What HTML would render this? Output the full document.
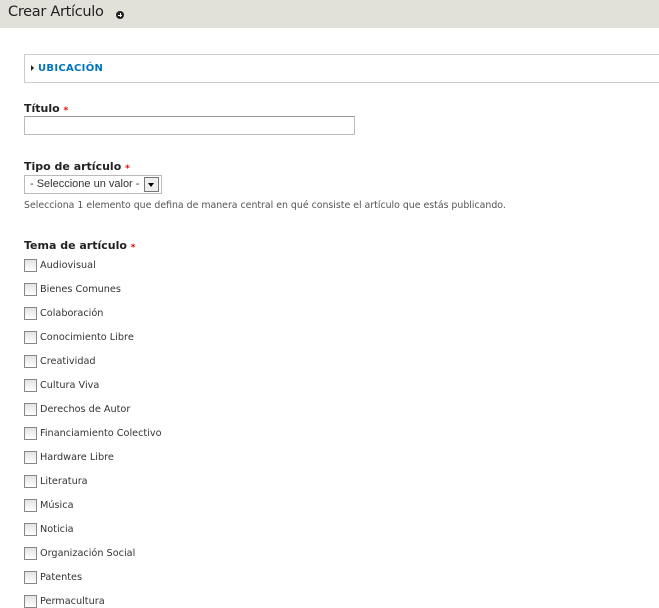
<!DOCTYPE html>
<html><head><meta charset="utf-8"><style>
body{margin:0;width:659px;height:604px;overflow:hidden;background:#fff;font-family:"DejaVu Sans",sans-serif;color:#333;}
.hdr{position:absolute;left:0;top:0;width:659px;height:28px;background:#e1e0d9;}
.hdr h1{position:absolute;left:8px;top:4px;margin:0;font:normal 14.5px "DejaVu Sans",sans-serif;color:#222;letter-spacing:-0.3px}
.plus{position:absolute;left:116px;top:11px;width:8px;height:8px;border-radius:50%;background:#222;}
.plus:before{content:"";position:absolute;left:2px;top:3.5px;width:4px;height:1px;background:#fff}
.plus:after{content:"";position:absolute;left:3.5px;top:2px;width:1px;height:4px;background:#fff}
.fs{position:absolute;left:24px;top:54px;width:640px;height:27px;border:1px solid #ccc;}
.fs span{position:absolute;left:13px;top:8px;font:bold 10px "DejaVu Sans",sans-serif;color:#0074bd;letter-spacing:.3px}
.fs i{position:absolute;left:6px;top:10px;width:0;height:0;border-left:3px solid #222;border-top:3px solid transparent;border-bottom:3px solid transparent}
.lbl{position:absolute;left:24px;font:bold 11px "DejaVu Sans",sans-serif;color:#222}
.lbl b{color:#e00;font-size:9px;position:relative;top:1px}
.inp{position:absolute;left:24px;top:116px;width:329px;height:17px;border:1px solid #bbb;border-top-color:#999}
.sel{position:absolute;left:24px;top:175px;width:136px;height:17px;border:1px solid #bbb;font:11px "Liberation Sans",sans-serif;color:#333}
.sel span{position:absolute;left:5px;top:2px}
.sel i{position:absolute;right:2px;top:1px;width:13px;height:13px;border:1px solid #777;background:#eee}
.sel i:after{content:"";position:absolute;left:3px;top:5px;border-top:4px solid #000;border-left:3.5px solid transparent;border-right:3.5px solid transparent}
.desc{position:absolute;left:24px;top:200px;font:9.4px "DejaVu Sans",sans-serif;color:#555}
.cb{position:absolute;left:24px;font:9.7px "DejaVu Sans",sans-serif;color:#333}
.cb i{position:absolute;left:0;top:0;width:11px;height:11px;border:1px solid #888;background:linear-gradient(#e4e4e4,#fff)}
.cb span{position:absolute;left:16px;top:1px;white-space:nowrap}
</style></head><body>
<div class="hdr"><h1>Crear Artículo</h1><div class="plus"></div></div>
<div class="fs"><i></i><span>UBICACIÓN</span></div>
<div class="lbl" style="top:102px">Título <b>*</b></div>
<div class="inp"></div>
<div class="lbl" style="top:160px">Tipo de artículo <b>*</b></div>
<div class="sel"><span>- Seleccione un valor -</span><i></i></div>
<div class="desc">Selecciona 1 elemento que defina de manera central en qué consiste el artículo que estás publicando.</div>
<div class="lbl" style="top:239px">Tema de artículo <b>*</b></div>
<div class="cb" style="top:259px"><i></i><span>Audiovisual</span></div>
<div class="cb" style="top:283px"><i></i><span>Bienes Comunes</span></div>
<div class="cb" style="top:307px"><i></i><span>Colaboración</span></div>
<div class="cb" style="top:331px"><i></i><span>Conocimiento Libre</span></div>
<div class="cb" style="top:355px"><i></i><span>Creatividad</span></div>
<div class="cb" style="top:379px"><i></i><span>Cultura Viva</span></div>
<div class="cb" style="top:403px"><i></i><span>Derechos de Autor</span></div>
<div class="cb" style="top:427px"><i></i><span>Financiamiento Colectivo</span></div>
<div class="cb" style="top:451px"><i></i><span>Hardware Libre</span></div>
<div class="cb" style="top:475px"><i></i><span>Literatura</span></div>
<div class="cb" style="top:499px"><i></i><span>Música</span></div>
<div class="cb" style="top:523px"><i></i><span>Noticia</span></div>
<div class="cb" style="top:547px"><i></i><span>Organización Social</span></div>
<div class="cb" style="top:571px"><i></i><span>Patentes</span></div>
<div class="cb" style="top:595px"><i></i><span>Permacultura</span></div>
</body></html>
